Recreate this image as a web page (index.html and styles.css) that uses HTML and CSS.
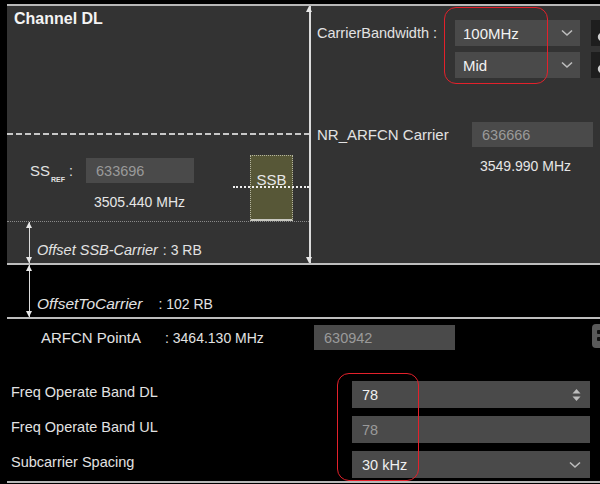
FILE: index.html
```html
<!DOCTYPE html>
<html>
<head>
<meta charset="utf-8">
<link rel="stylesheet" href="styles.css">
</head>
<body>
<div class="screen">
  <section class="panel">
    <div class="left">
      <div class="title">Channel DL</div>
      <div class="dash"></div>
      <div class="ss-area">
        <div class="ss-row">
          <span class="ss-label">SS<span class="sub">REF</span><span class="colon">:</span></span>
          <div class="field dim ss-field">633696</div>
        </div>
        <div class="freq ss-freq">3505.440 MHz</div>
        <div class="ssb">SSB</div>
        <div class="dotline"></div>
      </div>
      <div class="offset-area">
        <div class="varrow"><i class="ah up"></i><i class="ah down"></i></div>
        <div class="off-text"><span class="ital">Offset SSB-Carrier</span><span class="val gap-s">: 3 RB</span></div>
      </div>
    </div>
    <div class="vline"><i class="ah up"></i><i class="ah down"></i></div>
    <div class="right">
      <div class="cbw">
        <div class="cbw-label">CarrierBandwidth :</div>
        <div class="cbw-selects">
          <div class="sel-row">
            <div class="select"><span>100MHz</span><svg class="chev" width="12" height="8" viewBox="0 0 12 8"><polyline points="1,1.5 6,6 11,1.5" fill="none" stroke="#bdbdbd" stroke-width="1.6"/></svg></div>
            <div class="side-btn"><svg width="24" height="26" viewBox="0 0 24 26"><path d="M10 8 h5 a3 3 0 0 1 0 6 h-4 a3 3 0 0 0 0 6 h5" fill="none" stroke="#cfcfcf" stroke-width="2.4"/></svg></div>
          </div>
          <div class="sel-row">
            <div class="select"><span>Mid</span><svg class="chev" width="12" height="8" viewBox="0 0 12 8"><polyline points="1,1.5 6,6 11,1.5" fill="none" stroke="#bdbdbd" stroke-width="1.6"/></svg></div>
            <div class="side-btn"><svg width="24" height="26" viewBox="0 0 24 26"><path d="M10 8 h5 a3 3 0 0 1 0 6 h-4 a3 3 0 0 0 0 6 h5" fill="none" stroke="#cfcfcf" stroke-width="2.4"/></svg></div>
          </div>
        </div>
        <div class="highlight hl-top"></div>
      </div>
      <div class="nr-row">
        <div class="nr-label">NR_ARFCN Carrier</div>
        <div class="field dim nr-field">636666</div>
      </div>
      <div class="freq carrier-freq">3549.990 MHz</div>
    </div>
  </section>

  <div class="offset-carrier">
    <div class="varrow"><i class="ah up"></i><i class="ah down"></i></div>
    <div class="off-text"><span class="ital ital-l">OffsetToCarrier</span><span class="val gap-l">: 102 RB</span></div>
  </div>

  <div class="pointa-row">
    <div class="pa-label">ARFCN PointA</div>
    <div class="pa-val">: 3464.130 MHz</div>
    <div class="field dim pa-field">630942</div>
    <div class="pa-btn"><svg width="20" height="24" viewBox="0 0 20 24"><rect x="5" y="6" width="12" height="4" rx="1" fill="#111"/><rect x="5" y="13" width="12" height="4" rx="1" fill="#111"/></svg></div>
  </div>

  <div class="params">
    <div class="p-label">Freq Operate Band DL</div>
    <div class="field wide"><span>78</span><svg class="spin" width="9" height="14" viewBox="0 0 9 14"><polygon points="4.5,1 8.5,5.5 0.5,5.5" fill="#bdbdbd"/><polygon points="0.5,8.5 8.5,8.5 4.5,13" fill="#bdbdbd"/></svg></div>
    <div class="p-label">Freq Operate Band UL</div>
    <div class="field wide dim"><span>78</span></div>
    <div class="p-label">Subcarrier Spacing</div>
    <div class="field wide"><span>30 kHz</span><svg class="chev" width="12" height="8" viewBox="0 0 12 8"><polyline points="1,1.5 6,6 11,1.5" fill="none" stroke="#bdbdbd" stroke-width="1.6"/></svg></div>
    <div class="highlight hl-bottom"></div>
  </div>
</div>
</body>
</html>
```

FILE: styles.css
```css
html, body {
  margin: 0;
  padding: 0;
  background: #000;
  overflow: hidden;
}
body {
  width: 600px;
  height: 484px;
  font-family: "Liberation Sans", Arial, sans-serif;
  font-size: 14px;
  color: #e2e2e2;
}
.screen {
  margin-left: 7px;
  padding-top: 4px;
  width: 593px;
  overflow: hidden;
}
.panel {
  background: #333333;
  border-top: 2px solid #b8b8b8;
  border-bottom: 2px solid #bdbdbd;
  height: 257px;
  display: grid;
  grid-template-columns: 302px 2px 1fr;
}
.left {
  display: flex;
  flex-direction: column;
}
.title {
  height: 123px;
  padding: 4px 0 0 7px;
  font-weight: bold;
  font-size: 16px;
  line-height: 18px;
  color: #f4f4f4;
}
.dash {
  height: 2px;
  background: repeating-linear-gradient(to right, #c8c8c8 0 6px, transparent 6px 9px);
}
.ss-area {
  position: relative;
  height: 86px;
  border-bottom: 1px dotted #8a8a8a;
}
.ss-row {
  display: flex;
  align-items: center;
  margin-top: 23px;
  height: 25px;
}
.ss-label {
  width: 56px;
  flex: none;
  margin-left: 23px;
  font-size: 15px;
  display: flex;
  align-items: baseline;
  position: relative;
}
.sub {
  font-size: 7px;
  font-weight: bold;
  margin-left: 1px;
  position: relative;
  top: 6px;
}
.colon {
  margin-left: 4px;
  font-size: 14px;
}
.field {
  background: #4a4a4a;
  color: #f0f0f0;
  box-sizing: border-box;
  padding-left: 10px;
  font-size: 14.5px;
  display: flex;
  align-items: center;
  flex: none;
}
.field.dim {
  color: #9a9a9a;
}
.ss-field {
  width: 108px;
  height: 25px;
}
.freq {
  font-size: 14px;
  line-height: 16px;
  color: #e6e6e6;
}
.ss-freq {
  margin: 11px 0 0 87px;
}
.ssb {
  position: absolute;
  left: 243px;
  top: 20px;
  width: 43px;
  height: 66px;
  box-sizing: border-box;
  background: #575737;
  border: 1px dotted #b5b5a0;
  border-bottom: 2px solid #c8c8c0;
  text-align: center;
  padding-top: 16px;
  line-height: 16px;
  font-size: 15px;
  color: #e8e8e8;
}
.dotline {
  position: absolute;
  left: 226px;
  right: 0;
  top: 51px;
  border-top: 2px dotted #eeeeee;
}
.offset-area {
  height: 41px;
  display: flex;
}
.varrow {
  position: relative;
  width: 1px;
  flex: none;
  margin-left: 22px;
  background: #dcdcdc;
}
.ah {
  position: absolute;
  left: -3px;
  width: 0;
  height: 0;
  border-left: 3.5px solid transparent;
  border-right: 3.5px solid transparent;
}
.ah.up {
  top: 0;
  border-bottom: 6px solid #e8e8e8;
}
.ah.down {
  bottom: 0;
  border-top: 6px solid #e8e8e8;
}
.off-text {
  align-self: flex-end;
  margin-left: 7px;
  padding-bottom: 5px;
  line-height: 16px;
  white-space: nowrap;
}
.ital {
  font-style: italic;
  font-size: 14.5px;
}
.ital-l {
  font-size: 15.5px;
}
.val {
  font-size: 14px;
}
.val.gap-s {
  margin-left: 5px;
}
.val.gap-l {
  margin-left: 16px;
}
.vline {
  position: relative;
  background: #dcdcdc;
  width: 1.5px;
}
.right {
  position: relative;
  padding-left: 6px;
}
.cbw {
  display: flex;
  margin-top: 14px;
}
.cbw-label {
  width: 138px;
  flex: none;
  line-height: 26px;
  font-size: 14.5px;
  white-space: nowrap;
}
.cbw-selects {
  display: flex;
  flex-direction: column;
  gap: 6px;
}
.sel-row {
  display: flex;
}
.select {
  width: 125px;
  height: 26px;
  flex: none;
  box-sizing: border-box;
  background: #4a4a4a;
  color: #f2f2f2;
  display: flex;
  align-items: center;
  justify-content: space-between;
  padding: 0 7px 0 8px;
  font-size: 15px;
}
.side-btn {
  margin-left: 11px;
  width: 24px;
  height: 26px;
  background: #1e1e1e;
  flex: none;
}
.side-btn svg {
  display: block;
}
.highlight {
  position: absolute;
  border: 1.5px solid #e3212b;
  border-radius: 12px;
  box-sizing: border-box;
}
.hl-top {
  left: 133px;
  top: 1px;
  width: 104px;
  height: 77px;
}
.nr-row {
  display: flex;
  align-items: center;
  margin-top: 44px;
  height: 25px;
}
.nr-label {
  width: 155px;
  flex: none;
  font-size: 15px;
  white-space: nowrap;
}
.nr-field {
  width: 121px;
  height: 25px;
}
.carrier-freq {
  margin: 11px 0 0 163px;
}
.offset-carrier {
  height: 52px;
  display: flex;
  border-bottom: 2px solid #bdbdbd;
}
.pointa-row {
  display: flex;
  align-items: center;
  margin-top: 6px;
  height: 25px;
}
.pa-label {
  width: 124px;
  flex: none;
  margin-left: 34px;
  font-size: 15px;
}
.pa-val {
  width: 149px;
  flex: none;
  font-size: 14px;
}
.pa-field {
  width: 141px;
  height: 25px;
}
.pa-btn {
  margin-left: 137px;
  width: 20px;
  height: 24px;
  background: #5a5a5a;
  border-radius: 4px;
  flex: none;
  margin-top: -3px;
}
.pa-btn svg {
  display: block;
}
.params {
  position: relative;
  display: grid;
  grid-template-columns: 341px 238px;
  grid-auto-rows: 27px;
  row-gap: 8px;
  margin-top: 31px;
  padding: 0 0 3px 4px;
  border-bottom: 2px solid #b8b8b8;
}
.p-label {
  display: flex;
  align-items: center;
  font-size: 14.5px;
  margin-top: -6px;
}
.field.wide {
  justify-content: space-between;
  padding-right: 9px;
}
.hl-bottom {
  left: 330px;
  top: -8px;
  width: 82px;
  height: 108px;
}
```
